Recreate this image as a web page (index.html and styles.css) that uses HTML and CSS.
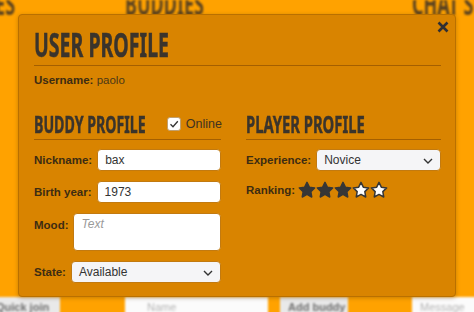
FILE: index.html
```html
<!DOCTYPE html>
<html>
<head>
<meta charset="utf-8">
<link rel="stylesheet" href="styles.css">
</head>
<body>
<div class="page">
  <div class="heads">
    <div class="col col-a"><span class="bighead">GAMES</span></div>
    <div class="col col-b"><span class="bighead">BUDDIES</span></div>
    <div class="col col-c"><span class="bighead">CHAT SESSIONS</span></div>
  </div>
  <div class="foot">
    <div class="col col-a"><span class="bgbtn btn-quick">Quick join</span></div>
    <div class="col col-b">
      <span class="bginput inp-name">Name</span>
      <span class="bgbtn btn-add">Add buddy</span>
    </div>
    <div class="col col-c"><span class="bginput inp-msg">Message</span></div>
  </div>
</div>

<div class="modal">
  <button class="close" aria-label="Close">
    <svg width="12" height="12" viewBox="0 0 12 12"><path d="M1.5 1.5 L10.5 10.5 M10.5 1.5 L1.5 10.5" stroke="#2f2f33" stroke-width="2.6" stroke-linecap="butt"/></svg>
  </button>
  <h1 class="title"><span class="cond">USER PROFILE</span></h1>
  <p class="username"><b>Username:</b> paolo</p>
  <div class="columns">
    <section class="col-buddy">
      <h2 class="section">
        <span class="cond cond-buddy">BUDDY PROFILE</span>
        <label class="online">
          <span class="box"><svg width="12" height="12" viewBox="0 0 12 12"><path d="M2.5 6.2 L5 8.7 L9.8 3.2" fill="none" stroke="#333" stroke-width="1.3"/></svg></span>
          Online
        </label>
      </h2>
      <div class="row">
        <label class="lbl">Nickname:</label>
        <div class="field">bax</div>
      </div>
      <div class="row">
        <label class="lbl">Birth year:</label>
        <div class="field">1973</div>
      </div>
      <div class="row row-top">
        <label class="lbl lbl-top">Mood:</label>
        <div class="field area"><span class="ph">Text</span></div>
      </div>
      <div class="row">
        <label class="lbl">State:</label>
        <div class="field select">Available
          <svg class="chev" width="10" height="6" viewBox="0 0 10 6"><path d="M1 1 L5 5 L9 1" fill="none" stroke="#333" stroke-width="1.4"/></svg>
        </div>
      </div>
    </section>
    <section class="col-player">
      <h2 class="section"><span class="cond cond-player">PLAYER PROFILE</span></h2>
      <div class="row">
        <label class="lbl">Experience:</label>
        <div class="field select">Novice
          <svg class="chev" width="10" height="6" viewBox="0 0 10 6"><path d="M1 1 L5 5 L9 1" fill="none" stroke="#333" stroke-width="1.4"/></svg>
        </div>
      </div>
      <div class="row">
        <label class="lbl">Ranking:</label>
        <div class="stars">
          <svg class="star full" viewBox="0 0 24 24"><polygon points="12,1.8 15.1,8.2 22.2,9.2 17.1,14.2 18.3,21.3 12,17.9 5.7,21.3 6.9,14.2 1.8,9.2 8.9,8.2"/></svg>
          <svg class="star full" viewBox="0 0 24 24"><polygon points="12,1.8 15.1,8.2 22.2,9.2 17.1,14.2 18.3,21.3 12,17.9 5.7,21.3 6.9,14.2 1.8,9.2 8.9,8.2"/></svg>
          <svg class="star full" viewBox="0 0 24 24"><polygon points="12,1.8 15.1,8.2 22.2,9.2 17.1,14.2 18.3,21.3 12,17.9 5.7,21.3 6.9,14.2 1.8,9.2 8.9,8.2"/></svg>
          <svg class="star empty" viewBox="0 0 24 24"><polygon points="12,1.8 15.1,8.2 22.2,9.2 17.1,14.2 18.3,21.3 12,17.9 5.7,21.3 6.9,14.2 1.8,9.2 8.9,8.2"/></svg>
          <svg class="star empty" viewBox="0 0 24 24"><polygon points="12,1.8 15.1,8.2 22.2,9.2 17.1,14.2 18.3,21.3 12,17.9 5.7,21.3 6.9,14.2 1.8,9.2 8.9,8.2"/></svg>
        </div>
      </div>
    </section>
  </div>
</div>
</body>
</html>
```
FILE: styles.css
```css
* { box-sizing: border-box; }
html, body { margin: 0; padding: 0; }
body {
  width: 474px;
  height: 312px;
  overflow: hidden;
  background: #ffa200;
  font-family: "Liberation Sans", Arial, sans-serif;
  position: relative;
}

/* condensed display type (narrowed sans) */
.cond {
  display: inline-block;
  white-space: nowrap;
  transform-origin: left center;
  transform: scaleX(0.58);
  -webkit-text-stroke: 0.5px currentColor;
}

/* background page (blurred) */
.page {
  height: 312px;
  display: flex;
  flex-direction: column;
  justify-content: space-between;
  filter: blur(1.3px);
}
.heads, .foot {
  display: flex;
  margin-left: -50px;
}
.heads {
  height: 15px;
  overflow: hidden;
  align-items: flex-end;
}
.foot {
  height: 15px;
  align-items: flex-start;
}
.col-a { width: 110px; flex: none; display: flex; }
.col-b { width: 280px; margin-left: 65px; flex: none; display: flex; gap: 12px; }
.col-c { margin-left: 7px; flex: none; display: flex; white-space: nowrap; }
.heads .col { align-items: flex-end; }
.heads .col-a { justify-content: flex-end; padding-right: 45px; }
.bighead {
  display: inline-block;
  font-family: "Noto Sans", "DejaVu Sans", sans-serif;
  font-weight: 700;
  font-size: 30px;
  line-height: 22px;
  color: #5a4220;
  white-space: nowrap;
  transform: scaleX(0.6);
  transform-origin: left bottom;
}
.heads .col-a .bighead { transform-origin: right bottom; }
.bgbtn, .bginput {
  height: 20px;
  font-size: 11px;
  line-height: 20px;
  padding: 0 8px;
  color: #8a8a8a;
  white-space: nowrap;
}
.bgbtn { background: #e9e9e9; color: #6d6d6d; font-weight: 700; }
.bginput { background: #fbfbfb; color: #b4b4b4; }
.btn-quick { width: 110px; padding-left: 46px; }
.inp-name { width: 143px; padding-left: 22px; }
.btn-add { width: 68px; }
.inp-msg { width: 70px; }

/* modal */
.modal {
  position: absolute;
  left: 18px;
  top: 14px;
  width: 438px;
  height: 283px;
  background: #d98400;
  border: 1px solid #b97000;
  border-radius: 4px;
  padding: 12px 14px 0 15px;
  box-shadow: 0 1px 4px rgba(90, 50, 0, 0.35);
  color: #3c2d16;
}
.close {
  position: absolute;
  top: 6px;
  right: 6px;
  width: 12px;
  height: 12px;
  padding: 0;
  border: 0;
  background: none;
  display: flex;
}
.title {
  margin: 0;
  font-family: "Noto Sans", "DejaVu Sans", sans-serif;
  font-weight: 700;
  font-size: 34px;
  line-height: 34px;
  padding-bottom: 4px;
  color: #3a342c;
  border-bottom: 1px solid #a45f00;
}
.title .cond { transform: scaleX(0.575); }
.username {
  margin: 7px 0 0;
  font-size: 11.5px;
  line-height: 14px;
  color: #4a3718;
}
.username b { color: #3d2c12; }
.columns {
  margin-top: 25px;
  display: grid;
  grid-template-columns: 187px 195px;
  column-gap: 25px;
}
.section {
  margin: 0 0 9px;
  display: flex;
  justify-content: space-between;
  align-items: center;
  font-family: "Noto Sans", "DejaVu Sans", sans-serif;
  font-weight: 700;
  font-size: 24px;
  line-height: 24px;
  padding-bottom: 3px;
  color: #3a342c;
  border-bottom: 1px solid #a45f00;
}
.cond-buddy { width: 110px; transform: scaleX(0.59); }
.cond-player { width: 118px; transform: scaleX(0.615); }
.online {
  display: flex;
  align-items: center;
  gap: 5px;
  font-family: "Liberation Sans", Arial, sans-serif;
  font-weight: 400;
  font-size: 12.5px;
  color: #3f3220;
  margin-right: -1px;
}
.box {
  width: 14px;
  height: 14px;
  background: #fff;
  border: 1px solid #c0a070;
  border-radius: 3px;
  display: flex;
  align-items: center;
  justify-content: center;
}
.row {
  display: flex;
  align-items: center;
  gap: 5px;
  margin-bottom: 10px;
}
.row-top { align-items: flex-start; }
.lbl {
  font-size: 11.5px;
  font-weight: 700;
  color: #3d2c12;
  white-space: nowrap;
}
.lbl-top { padding-top: 6px; }
.field {
  flex: 1;
  height: 22px;
  background: #fff;
  border: 1px solid #c27a10;
  border-radius: 4px;
  font-size: 12px;
  line-height: 20px;
  padding: 0 7px;
  color: #333;
  position: relative;
}
.area { height: 38px; line-height: 20px; }
.ph { color: #9a9a9a; font-style: italic; }
.select { background: #f5f5f7; }
.chev {
  position: absolute;
  right: 7px;
  top: 8px;
}
.stars {
  display: flex;
  gap: 0;
  margin-left: -2px;
}
.star { width: 18px; height: 18px; }
.star polygon { stroke: #363636; stroke-width: 2; stroke-linejoin: round; }
.full polygon { fill: #363636; }
.empty polygon { fill: #fff; }
```
